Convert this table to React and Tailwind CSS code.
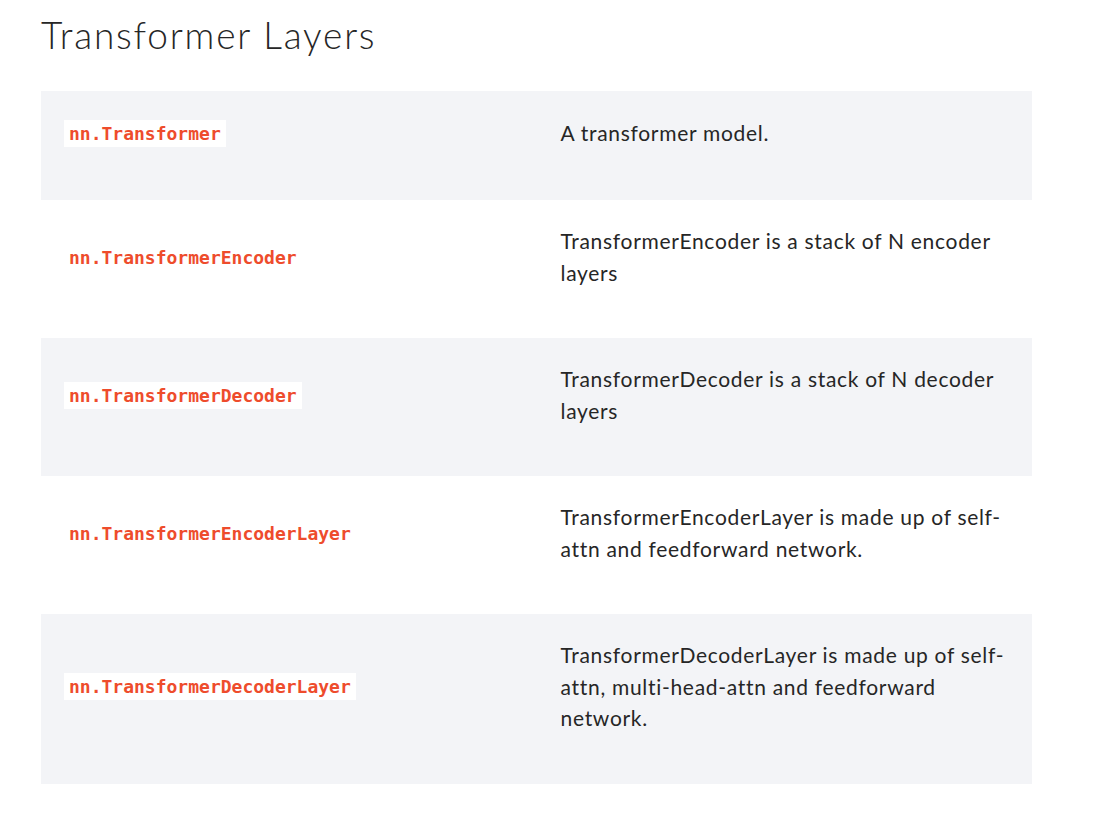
const rows = [
  ['nn.Transformer', 'A transformer model.'],
  ['nn.TransformerEncoder', 'TransformerEncoder is a stack of N encoder layers'],
  ['nn.TransformerDecoder', 'TransformerDecoder is a stack of N decoder layers'],
  ['nn.TransformerEncoderLayer', 'TransformerEncoderLayer is made up of self-attn and feedforward network.'],
  ['nn.TransformerDecoderLayer', 'TransformerDecoderLayer is made up of self-attn, multi-head-attn and feedforward network.'],
];

export default function App() {
  return (
    <div className="min-h-screen bg-white pl-[41px] pt-[13px] text-[#262626]" style={{ fontFamily: 'Lato, "Open Sans", sans-serif' }}>
      <h1 className="text-[37px] font-light leading-[44px] tracking-[1.8px] mb-[34px]">Transformer Layers</h1>
      <table className="w-[991px] border-collapse">
        <tbody>
          {rows.map(([name, desc], i) => (
            <tr key={name} className={i % 2 === 0 ? 'bg-[#f3f4f7]' : 'bg-white'}>
              <td className="w-1/2 px-[23px] py-[25px] align-middle">
                <p className="mb-[25px] text-[20px] leading-[32px]">
                  <code
                    className="bg-white px-[5px] py-[3px] text-[18px] font-bold text-[#ee4c2c]"
                    style={{ fontFamily: '"DejaVu Sans Mono", monospace' }}
                  >
                    {name}
                  </code>
                </p>
              </td>
              <td className="w-1/2 px-[24px] py-[25px] align-middle">
                <p className="mb-[25px] text-[21px] leading-[31.5px] tracking-[0.7px]">{desc}</p>
              </td>
            </tr>
          ))}
        </tbody>
      </table>
    </div>
  );
}
